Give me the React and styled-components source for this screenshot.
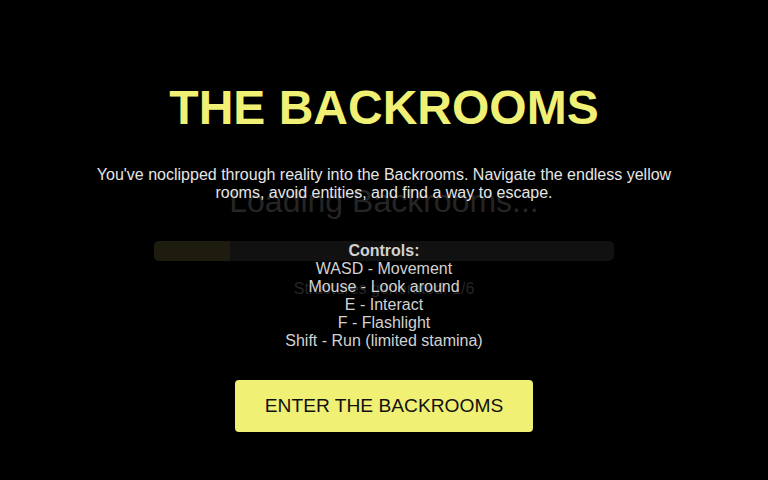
import styled, { createGlobalStyle } from "styled-components";

const GlobalStyle = createGlobalStyle`
  html, body {
    margin: 0;
    padding: 0;
    background: #000;
    font-family: "Liberation Sans", Arial, sans-serif;
    overflow: hidden;
  }
`;

const Screen = styled.div`
  position: relative;
  width: 100vw;
  height: 100vh;
  background: #000;
`;

const LoadingScreen = styled.div`
  height: 100%;
  display: flex;
  flex-direction: column;
  align-items: center;
  justify-content: center;
`;

const LoadingTitle = styled.div`
  font-size: 32px;
  line-height: 37px;
  color: #252525;
  margin-bottom: 21px;
`;

const ProgressTrack = styled.div`
  width: 60%;
  height: 20px;
  border-radius: 5px;
  background: #111;
  overflow: hidden;
  margin-bottom: 19px;
`;

const ProgressFill = styled.div`
  height: 100%;
  background: #1d1c0f;
`;

const LoadingStep = styled.div`
  font-size: 16px;
  line-height: 18px;
  color: #252525;
`;

const Menu = styled.div`
  position: absolute;
  inset: 0;
  display: flex;
  flex-direction: column;
  align-items: center;
  padding-top: 80px;
  text-align: center;
`;

const Title = styled.h1`
  margin: 0 0 30px;
  font-size: 48px;
  line-height: 56px;
  font-weight: 700;
  color: #f0f075;
`;

const Intro = styled.p`
  margin: 0 0 40px;
  max-width: 600px;
  font-size: 16px;
  line-height: 18px;
  color: #e6e6e6;
`;

const Controls = styled.div`
  display: flex;
  flex-direction: column;
  font-size: 16px;
  line-height: 18px;
  color: #d2d2d2;
  margin-bottom: 30px;
`;

const ControlsHeading = styled.strong`
  font-weight: 700;
`;

const EnterButton = styled.button`
  font-family: inherit;
  font-size: 19.2px;
  line-height: 22px;
  padding: 15px 30px;
  border: none;
  border-radius: 4px;
  background: #f0f075;
  color: #111;
  cursor: pointer;
`;

const controls = [
  "WASD - Movement",
  "Mouse - Look around",
  "E - Interact",
  "F - Flashlight",
  "Shift - Run (limited stamina)",
];

const App = () => {
  const step = 1;
  const total = 6;

  return (
    <>
      <GlobalStyle />
      <Screen>
        <LoadingScreen>
          <LoadingTitle>Loading Backrooms...</LoadingTitle>
          <ProgressTrack>
            <ProgressFill style={{ width: `${(step / total) * 100}%` }} />
          </ProgressTrack>
          <LoadingStep>
            Structures generated: {step}/{total}
          </LoadingStep>
        </LoadingScreen>
        <Menu>
          <Title>THE BACKROOMS</Title>
          <Intro>
            You've noclipped through reality into the Backrooms. Navigate the
            endless yellow rooms, avoid entities, and find a way to escape.
          </Intro>
          <Controls>
            <ControlsHeading>Controls:</ControlsHeading>
            {controls.map((c) => (
              <span key={c}>{c}</span>
            ))}
          </Controls>
          <EnterButton>ENTER THE BACKROOMS</EnterButton>
        </Menu>
      </Screen>
    </>
  );
};

export default App;
